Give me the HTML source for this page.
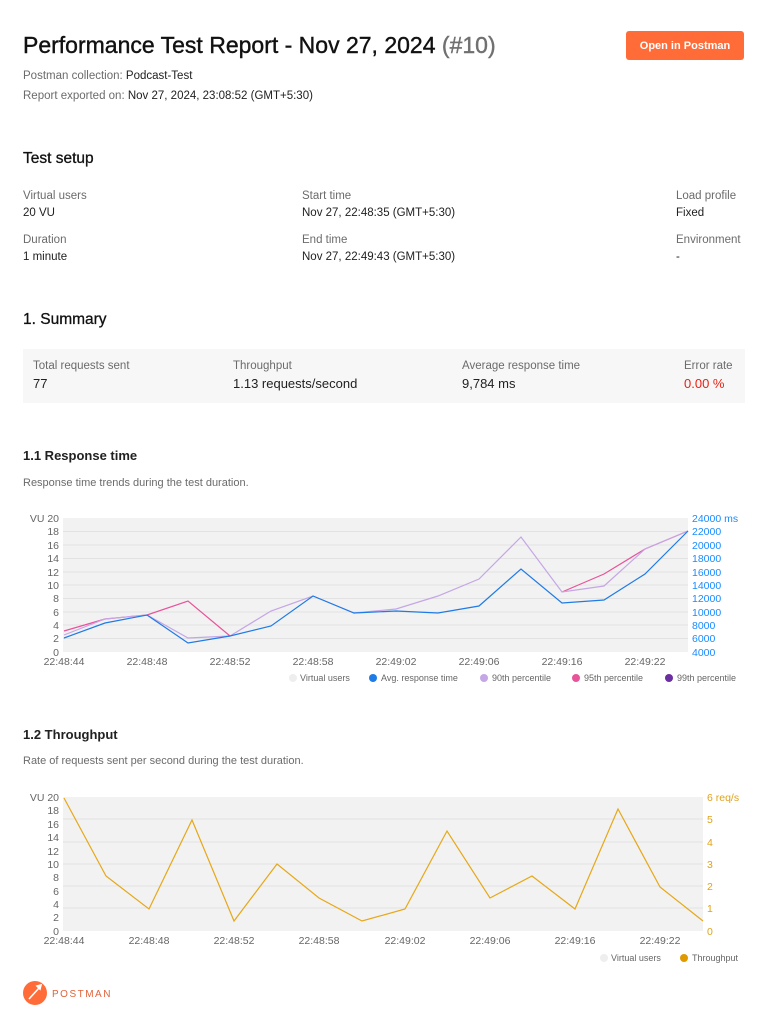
<!DOCTYPE html>
<html><head><meta charset="utf-8"><style>
body{margin:0;width:768px;height:1024px;background:#fff;font-family:"Liberation Sans",sans-serif;color:#212121;position:relative;overflow:hidden}
.a{position:absolute;white-space:nowrap}
.g{color:#6b6b6b}
.s{font-size:11.5px}
.h{font-size:15.5px;color:#111;-webkit-text-stroke:0.3px #111}
</style></head><body>
<div class="a" style="left:23px;top:32px;font-size:23px;color:#111;-webkit-text-stroke:0.4px #111">Performance Test Report - Nov 27, 2024 <span style="color:#707070;-webkit-text-stroke:0.4px #707070">(#10)</span></div>
<div class="a" style="left:626px;top:31px;width:118px;height:29px;background:#ff6c37;border-radius:3px;color:#fff;font-size:11px;font-weight:bold;display:flex;align-items:center;justify-content:center">Open in Postman</div>
<div class="a s" style="left:23px;top:70px"><span class="g">Postman collection:</span> Podcast-Test</div>
<div class="a s" style="left:23px;top:90px"><span class="g">Report exported on:</span> Nov 27, 2024, 23:08:52 (GMT+5:30)</div>

<div class="a h" style="left:23px;top:150px">Test setup</div>
<div class="a s g" style="left:23px;top:190px">Virtual users</div>
<div class="a s" style="left:23px;top:207px">20 VU</div>
<div class="a s g" style="left:23px;top:234px">Duration</div>
<div class="a s" style="left:23px;top:251px">1 minute</div>
<div class="a s g" style="left:302px;top:190px">Start time</div>
<div class="a s" style="left:302px;top:207px">Nov 27, 22:48:35 (GMT+5:30)</div>
<div class="a s g" style="left:302px;top:234px">End time</div>
<div class="a s" style="left:302px;top:251px">Nov 27, 22:49:43 (GMT+5:30)</div>
<div class="a s g" style="left:676px;top:190px">Load profile</div>
<div class="a s" style="left:676px;top:207px">Fixed</div>
<div class="a s g" style="left:676px;top:234px">Environment</div>
<div class="a s" style="left:676px;top:251px">-</div>

<div class="a h" style="left:23px;top:311px">1. Summary</div>
<div class="a" style="left:23px;top:349px;width:722px;height:54px;background:#f7f7f7"></div>
<div class="a s g" style="left:33px;top:360px">Total requests sent</div>
<div class="a" style="left:33px;top:376px;font-size:13px">77</div>
<div class="a s g" style="left:233px;top:360px">Throughput</div>
<div class="a" style="left:233px;top:376px;font-size:13px">1.13 requests/second</div>
<div class="a s g" style="left:462px;top:360px">Average response time</div>
<div class="a" style="left:462px;top:376px;font-size:13px">9,784 ms</div>
<div class="a s g" style="left:684px;top:360px">Error rate</div>
<div class="a" style="left:684px;top:376px;font-size:13px;color:#eb2013">0.00 %</div>

<div class="a" style="left:23px;top:448px;font-size:13px;font-weight:bold">1.1 Response time</div>
<div class="a g" style="left:23px;top:477px;font-size:11px">Response time trends during the test duration.</div>
<div class="a" style="left:23px;top:727px;font-size:13px;font-weight:bold">1.2 Throughput</div>
<div class="a g" style="left:23px;top:755px;font-size:11px">Rate of requests sent per second during the test duration.</div>

<svg class="a" style="left:0;top:0" width="768" height="1024" font-family="Liberation Sans, sans-serif" font-size="10.5">
<g>
<rect x="63" y="518" width="625" height="134" fill="#f2f2f2"/>
<g stroke="#e2e2e2" stroke-width="1">
<line x1="63" x2="688" y1="531.5" y2="531.5"/><line x1="63" x2="688" y1="545" y2="545"/><line x1="63" x2="688" y1="558.5" y2="558.5"/><line x1="63" x2="688" y1="572" y2="572"/><line x1="63" x2="688" y1="585" y2="585"/><line x1="63" x2="688" y1="598.5" y2="598.5"/><line x1="63" x2="688" y1="612" y2="612"/><line x1="63" x2="688" y1="625" y2="625"/><line x1="63" x2="688" y1="638.5" y2="638.5"/>
</g>
<g fill="#666" text-anchor="end">
<text x="59" y="522">VU 20</text><text x="59" y="535">18</text><text x="59" y="549">16</text><text x="59" y="562">14</text><text x="59" y="576">12</text><text x="59" y="589">10</text><text x="59" y="602">8</text><text x="59" y="616">6</text><text x="59" y="629">4</text><text x="59" y="642">2</text><text x="59" y="656">0</text>
</g>
<g fill="#1a8cff">
<text x="692" y="522">24000 ms</text><text x="692" y="535">22000</text><text x="692" y="549">20000</text><text x="692" y="562">18000</text><text x="692" y="576">16000</text><text x="692" y="589">14000</text><text x="692" y="602">12000</text><text x="692" y="616">10000</text><text x="692" y="629">8000</text><text x="692" y="642">6000</text><text x="692" y="656">4000</text>
</g>
<g fill="#666" text-anchor="middle">
<text x="64" y="665">22:48:44</text><text x="147" y="665">22:48:48</text><text x="230" y="665">22:48:52</text><text x="313" y="665">22:48:58</text><text x="396" y="665">22:49:02</text><text x="479" y="665">22:49:06</text><text x="562" y="665">22:49:16</text><text x="645" y="665">22:49:22</text>
</g>
<polyline fill="none" stroke="#e8539a" stroke-width="1.2" points="64,631 105,619 147,615 188,601 230,636"/>
<polyline fill="none" stroke="#e8539a" stroke-width="1.2" points="562,592 604,574 645,549 688,531"/>
<polyline fill="none" stroke="#c5a6e6" stroke-width="1.2" points="64,635 105,619 147,615 188,638 230,636 271,611 313,596 354,613 396,609 438,596 479,579 521,537 562,592 604,586 645,549 688,531"/>
<polyline fill="none" stroke="#1f7be6" stroke-width="1.2" points="64,638 105,623 147,615 188,643 230,636 271,626 313,596 354,613 396,611 438,613 479,606 521,569 562,603 604,600 645,574 688,531"/>
<g font-size="9" fill="#666">
<circle cx="293" cy="678" r="4" fill="#eee"/><text x="300" y="681">Virtual users</text>
<circle cx="373" cy="678" r="4" fill="#1f7be6"/><text x="381" y="681">Avg. response time</text>
<circle cx="484" cy="678" r="4" fill="#c5a6e6"/><text x="492" y="681">90th percentile</text>
<circle cx="576" cy="678" r="4" fill="#e8539a"/><text x="584" y="681">95th percentile</text>
<circle cx="669" cy="678" r="4" fill="#6a2fa0"/><text x="677" y="681">99th percentile</text>
</g>
</g>
<g>
<rect x="63" y="797" width="640" height="134" fill="#f2f2f2"/>
<g stroke="#e2e2e2" stroke-width="1">
<line x1="63" x2="703" y1="819" y2="819"/><line x1="63" x2="703" y1="842" y2="842"/><line x1="63" x2="703" y1="864" y2="864"/><line x1="63" x2="703" y1="886" y2="886"/><line x1="63" x2="703" y1="908" y2="908"/>
</g>
<g fill="#666" text-anchor="end">
<text x="59" y="801">VU 20</text><text x="59" y="814">18</text><text x="59" y="828">16</text><text x="59" y="841">14</text><text x="59" y="855">12</text><text x="59" y="868">10</text><text x="59" y="881">8</text><text x="59" y="895">6</text><text x="59" y="908">4</text><text x="59" y="921">2</text><text x="59" y="935">0</text>
</g>
<g fill="#e0a21a">
<text x="707" y="801">6 req/s</text><text x="707" y="823">5</text><text x="707" y="846">4</text><text x="707" y="868">3</text><text x="707" y="890">2</text><text x="707" y="912">1</text><text x="707" y="935">0</text>
</g>
<g fill="#666" text-anchor="middle">
<text x="64" y="944">22:48:44</text><text x="149" y="944">22:48:48</text><text x="234" y="944">22:48:52</text><text x="319" y="944">22:48:58</text><text x="405" y="944">22:49:02</text><text x="490" y="944">22:49:06</text><text x="575" y="944">22:49:16</text><text x="660" y="944">22:49:22</text>
</g>
<polyline fill="none" stroke="#e6a817" stroke-width="1.2" points="64,798 106,876 149,909 192,820 234,921 277,864 319,898 362,921 405,909 447,831 490,898 532,876 575,909 618,809 660,887 703,921"/>
<g font-size="9" fill="#666">
<circle cx="604" cy="958" r="4" fill="#eee"/><text x="611" y="961">Virtual users</text>
<circle cx="684" cy="958" r="4" fill="#e09a00"/><text x="692" y="961">Throughput</text>
</g>
</g>
<circle cx="35" cy="993" r="12" fill="#ff6c37"/>
<path d="M29 999 L39 988 M37 986 l4 -1 -1 4 z" stroke="#fff" stroke-width="1.6" fill="#fff"/>
<text x="52" y="997" fill="#e0633a" font-size="10" letter-spacing="1.5">POSTMAN</text>
</svg>
</body></html>
